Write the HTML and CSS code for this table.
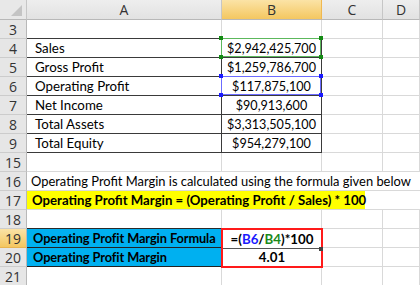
FILE: index.html
```html
<!DOCTYPE html>
<html>
<head>
<meta charset="utf-8">
<link rel="stylesheet" href="styles.css">
</head>
<body>
<div class="sheet">
  <div class="corner"><span class="tri"></span></div>
  <div class="colhead">A</div>
  <div class="colhead sel">B</div>
  <div class="colhead">C</div>
  <div class="colhead">D</div>

  <div class="rowhead">3</div>
  <div class="c tt"></div><div class="c tt"></div><div class="c"></div><div class="c"></div>

  <div class="rowhead">4</div>
  <div class="c t lbl">Sales</div><div class="c t val ref-green">$2,942,425,700</div><div class="c"></div><div class="c"></div>

  <div class="rowhead">5</div>
  <div class="c t lbl">Gross Profit</div><div class="c t val">$1,259,786,700</div><div class="c"></div><div class="c"></div>

  <div class="rowhead">6</div>
  <div class="c t lbl">Operating Profit</div><div class="c t val ref-blue">$117,875,100</div><div class="c"></div><div class="c"></div>

  <div class="rowhead">7</div>
  <div class="c t lbl">Net Income</div><div class="c t val">$90,913,600</div><div class="c"></div><div class="c"></div>

  <div class="rowhead">8</div>
  <div class="c t lbl">Total Assets</div><div class="c t val">$3,313,505,100</div><div class="c"></div><div class="c"></div>

  <div class="rowhead">9</div>
  <div class="c t lbl">Total Equity</div><div class="c t val">$954,279,100</div><div class="c"></div><div class="c"></div>

  <div class="rowhead">15</div>
  <div class="c"></div><div class="c"></div><div class="c"></div><div class="c"></div>

  <div class="rowhead">16</div>
  <div class="c wide txt">Operating Profit Margin is calculated using the formula given below</div>

  <div class="rowhead">17</div>
  <div class="c wide"><div class="yellow">Operating Profit Margin = (Operating Profit / Sales) * 100</div></div>

  <div class="rowhead">18</div>
  <div class="c bb"></div><div class="c"></div><div class="c"></div><div class="c"></div>

  <div class="rowhead sel">19</div>
  <div class="c blue">Operating Profit Margin Formula</div>
  <div class="redbox">
    <div class="rb-cell rb-top">=(<span class="f-blue">B6</span>/<span class="f-green">B4</span>)*100<span class="handle"></span></div>
    <div class="rb-cell">4.01</div>
  </div>
  <div class="c"></div><div class="c"></div>

  <div class="rowhead">20</div>
  <div class="c blue">Operating Profit Margin</div>
  <div class="c"></div><div class="c"></div>

  <div class="rowhead">21</div>
  <div class="c"></div><div class="c"></div><div class="c"></div><div class="c"></div>
</div>
</body>
</html>
```

FILE: styles.css
```css
html, body {
  margin: 0;
  padding: 0;
  background: #fff;
}
.sheet {
  display: grid;
  grid-template-columns: 27px 195px 100px 61px 37px;
  grid-template-rows: 20px repeat(14, 19px);
  font-family: Lato, "Open Sans", sans-serif;
  font-size: 13.3px;
  color: #000;
  width: 420px;
  height: 285px;
  overflow: hidden;
}
.corner {
  background: #e8e8e8;
  border-right: 1px solid #c6c6c6;
  border-bottom: 1px solid #b8b8b8;
  box-sizing: border-box;
  position: relative;
}
.tri {
  position: absolute;
  right: 4px;
  bottom: 3px;
  width: 0;
  height: 0;
  border-left: 11px solid transparent;
  border-bottom: 11px solid #c4c4c4;
}
.colhead {
  background: linear-gradient(#eeeeee, #e2e2e2);
  border-right: 1px solid #c6c6c6;
  border-bottom: 1px solid #b8b8b8;
  box-sizing: border-box;
  display: flex;
  align-items: center;
  justify-content: center;
  color: #333;
  font-size: 14px;
  font-family: "Open Sans", Lato, sans-serif;
}
.colhead.sel {
  background: linear-gradient(#fbe3a6, #f4c760);
  border-right-color: #f0b850;
}
.rowhead {
  background: #e6e6e6;
  border-right: 1px solid #b8b8b8;
  border-bottom: 1px solid #cccccc;
  box-sizing: border-box;
  display: flex;
  align-items: center;
  justify-content: center;
  color: #333;
  font-size: 14px;
  font-family: "Open Sans", Lato, sans-serif;
}
.rowhead.sel {
  background: linear-gradient(#fbe3a6, #f4c760);
  border-bottom-color: #e8b450;
}
.c {
  border-right: 1px solid #d9d9d9;
  border-bottom: 1px solid #d9d9d9;
  box-sizing: border-box;
  display: flex;
  align-items: center;
  white-space: nowrap;
  position: relative;
}
.tt { border-bottom-color: #3a3a3a; }
.bb { border-bottom-color: #2a2a2a; }
.t {
  border-right-color: #3a3a3a;
  border-bottom-color: #3a3a3a;
}
.lbl { padding-left: 8px; }
.val { justify-content: center; font-size: 12.6px; }
.wide {
  grid-column: 2 / 6;
  border-right: none;
  overflow: hidden;
}
.txt { padding-left: 4px; font-size: 12.9px; }
.yellow {
  background: #ffff00;
  width: 338px;
  height: 100%;
  display: flex;
  align-items: center;
  padding-left: 5px;
  box-sizing: border-box;
  font-weight: bold;
  font-size: 13.2px;
}
.blue {
  background: #00b0f0;
  font-weight: bold;
  padding-left: 6px;
  border-right-color: #222;
  border-bottom-color: #222;
  overflow: hidden;
  font-size: 12.8px;
  letter-spacing: -0.1px;
}
.redbox {
  grid-row: span 2;
  border: 2px solid #ff1a1a;
  margin: -1px -1px -1px -1px;
  display: flex;
  flex-direction: column;
  position: relative;
  z-index: 1;
  background: #fff;
}
.rb-cell {
  flex: 1;
  display: flex;
  align-items: center;
  justify-content: center;
  font-weight: bold;
  position: relative;
}
.rb-top { border-bottom: 1px solid #555; }
.f-blue { color: #1a1aff; }
.f-green { color: #1a8a1a; }
.handle {
  position: absolute;
  right: -2px;
  bottom: -3px;
  width: 4px;
  height: 4px;
  background: #444;
}
.ref-green::after, .ref-blue::after {
  content: "";
  position: absolute;
  inset: -1px 0 0 -1px;
  border: 1px solid #5cb85c;
}
.ref-blue::after { border-color: #6b6bff; }
.ref-green::before, .ref-blue::before {
  content: "";
  position: absolute;
  inset: -3px -2px -2px -3px;
  background:
    linear-gradient(#138a13, #138a13) left top / 4px 4px no-repeat,
    linear-gradient(#138a13, #138a13) right top / 4px 4px no-repeat,
    linear-gradient(#138a13, #138a13) left bottom / 4px 4px no-repeat,
    linear-gradient(#138a13, #138a13) right bottom / 4px 4px no-repeat;
  z-index: 2;
}
.ref-blue::before {
  background:
    linear-gradient(#1a1aff, #1a1aff) left top / 4px 4px no-repeat,
    linear-gradient(#1a1aff, #1a1aff) right top / 4px 4px no-repeat,
    linear-gradient(#1a1aff, #1a1aff) left bottom / 4px 4px no-repeat,
    linear-gradient(#1a1aff, #1a1aff) right bottom / 4px 4px no-repeat;
}
```
